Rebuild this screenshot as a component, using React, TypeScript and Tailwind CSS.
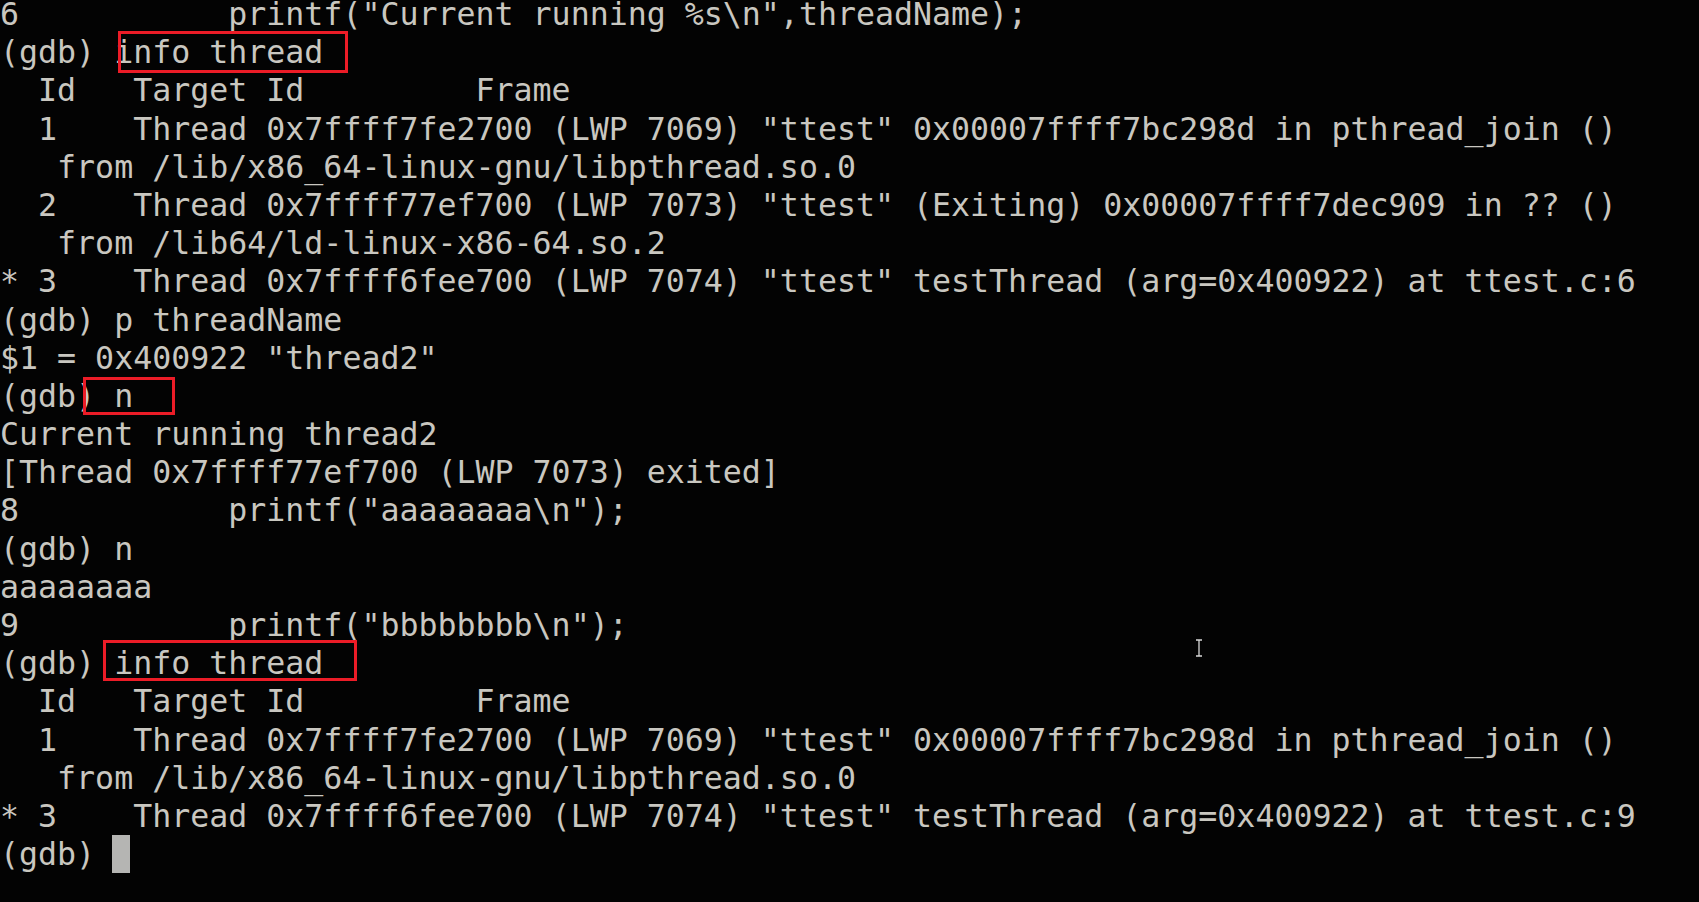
import React from "react";

type Mark = { left: number; top: number; width: number; height: number };

const lines: { text: string; mark?: Mark; cursor?: boolean }[] = [
  { text: '6           printf("Current running %s\\n",threadName);' },
  { text: "(gdb) info thread", mark: { left: 118, top: -2.5, width: 230, height: 42 } },
  { text: "  Id   Target Id         Frame " },
  { text: '  1    Thread 0x7ffff7fe2700 (LWP 7069) "ttest" 0x00007ffff7bc298d in pthread_join ()' },
  { text: "   from /lib/x86_64-linux-gnu/libpthread.so.0" },
  { text: '  2    Thread 0x7ffff77ef700 (LWP 7073) "ttest" (Exiting) 0x00007ffff7dec909 in ?? ()' },
  { text: "   from /lib64/ld-linux-x86-64.so.2" },
  { text: '* 3    Thread 0x7ffff6fee700 (LWP 7074) "ttest" testThread (arg=0x400922) at ttest.c:6' },
  { text: "(gdb) p threadName" },
  { text: '$1 = 0x400922 "thread2"' },
  { text: "(gdb) n", mark: { left: 83, top: 0.5, width: 92, height: 38 } },
  { text: "Current running thread2" },
  { text: "[Thread 0x7ffff77ef700 (LWP 7073) exited]" },
  { text: '8           printf("aaaaaaaa\\n");' },
  { text: "(gdb) n" },
  { text: "aaaaaaaa" },
  { text: '9           printf("bbbbbbbb\\n");' },
  { text: "(gdb) info thread", mark: { left: 103, top: -4, width: 254, height: 41 } },
  { text: "  Id   Target Id         Frame " },
  { text: '  1    Thread 0x7ffff7fe2700 (LWP 7069) "ttest" 0x00007ffff7bc298d in pthread_join ()' },
  { text: "   from /lib/x86_64-linux-gnu/libpthread.so.0" },
  { text: '* 3    Thread 0x7ffff6fee700 (LWP 7074) "ttest" testThread (arg=0x400922) at ttest.c:9' },
  { text: "(gdb) ", cursor: true },
];

const IBeam = () => (
  <svg width="10" height="18" viewBox="0 0 10 18" className="absolute left-[1194px] top-[639px]">
    <path d="M2 1h6M5 1v16M2 17h6" stroke="#d8d8d8" strokeWidth="1.3" fill="none" />
  </svg>
);

export default function App() {
  return (
    <div className="relative w-[1699px] h-[902px] overflow-hidden bg-[#030303]">
      <div className="flex flex-col mt-[-5px] font-['DejaVu_Sans_Mono',monospace] text-[31.6px] leading-[38.2px] text-[#c9c7c0]">
        {lines.map((l, i) => (
          <div key={i} className="relative h-[38.2px] whitespace-pre">
            {l.text}
            {l.cursor && (
              <span className="inline-block align-top w-[18px] h-[38px] ml-[-2px] bg-[#b5b5b3]" />
            )}
            {l.mark && (
              <span
                className="absolute border-[3px] border-[#ec1c27]"
                style={{ left: l.mark.left, top: l.mark.top, width: l.mark.width, height: l.mark.height }}
              />
            )}
          </div>
        ))}
      </div>
      <IBeam />
    </div>
  );
}
